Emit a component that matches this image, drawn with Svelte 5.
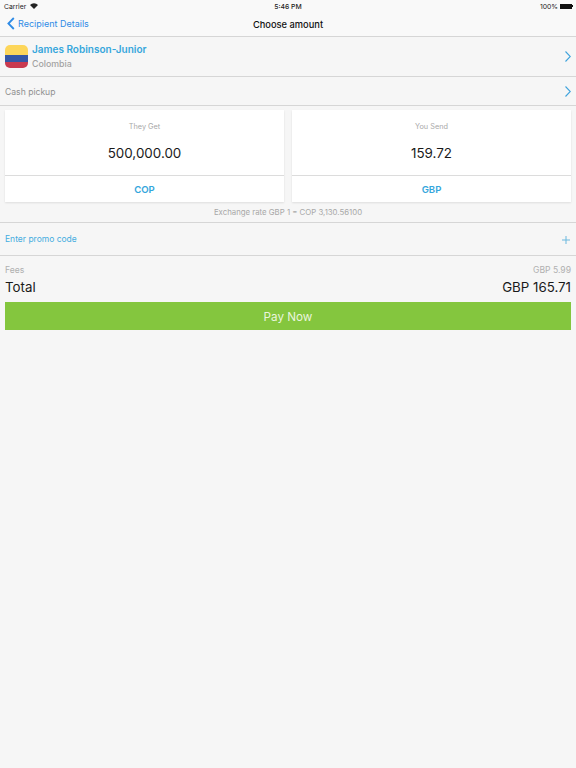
<script>
  const cards = [
    { label: 'They Get', value: '500,000.00', currency: 'COP' },
    { label: 'You Send', value: '159.72', currency: 'GBP' }
  ];
</script>

<div class="page">
  <header class="top">
    <div class="status">
      <div class="status-left">
        <span>Carrier</span>
        <svg width="8" height="6" viewBox="0 0 8 6"><path d="M0 2 A5.6 5.6 0 0 1 8 2 L4 6 Z" fill="#222"/></svg>
      </div>
      <span class="time">5:46 PM</span>
      <div class="status-right">
        <span>100%</span>
        <span class="battery"></span>
      </div>
    </div>
    <nav class="nav">
      <div class="back">
        <svg width="8" height="13" viewBox="0 0 8 13"><path d="M6.8 1 L1.4 6.5 L6.8 12" fill="none" stroke="#2f8be6" stroke-width="1.8"/></svg>
        <span>Recipient Details</span>
      </div>
      <div class="title">Choose amount</div>
    </nav>
  </header>

  <section class="row recipient">
    <div class="flag"><i class="y"></i><i class="b"></i><i class="r"></i></div>
    <div class="who">
      <div class="name">James Robinson-Junior</div>
      <div class="country">Colombia</div>
    </div>
    <svg class="chev" width="6" height="11" viewBox="0 0 6 11"><path d="M0.5 0.5 L5.3 5.5 L0.5 10.5" fill="none" stroke="#3fa3dc" stroke-width="1.1"/></svg>
  </section>

  <section class="row cash">
    <span>Cash pickup</span>
    <svg class="chev" width="6" height="11" viewBox="0 0 6 11"><path d="M0.5 0.5 L5.3 5.5 L0.5 10.5" fill="none" stroke="#3fa3dc" stroke-width="1.1"/></svg>
  </section>

  <section class="cards">
    {#each cards as c}
      <div class="card">
        <div class="card-label">{c.label}</div>
        <div class="card-value">{c.value}</div>
        <div class="card-cur">{c.currency}</div>
      </div>
    {/each}
  </section>

  <div class="rate">Exchange rate GBP 1 = COP 3,130.56100</div>

  <section class="row promo">
    <span>Enter promo code</span>
    <svg width="8" height="8" viewBox="0 0 8 8"><path d="M4 0V8M0 4H8" stroke="#6bb8de" stroke-width="1"/></svg>
  </section>

  <section class="totals">
    <div class="fees"><span>Fees</span><span>GBP 5.99</span></div>
    <div class="total"><span>Total</span><span>GBP 165.71</span></div>
    <button class="pay">Pay Now</button>
  </section>
</div>

<style>
  :global(body) {
    margin: 0;
    background: #f6f6f6;
  }
  .page {
    width: 576px;
    height: 768px;
    overflow: hidden;
    background: #f6f6f6;
    font-family: Inter, "Liberation Sans", sans-serif;
    color: #111;
  }
  .top {
    height: 36px;
    background: #f9f9f9;
    border-bottom: 1px solid #d6d6d6;
  }
  .status {
    height: 12px;
    display: grid;
    grid-template-columns: 1fr auto 1fr;
    align-items: center;
    padding: 0 4px;
    font-size: 6.8px;
    color: #222;
  }
  .status-left {
    display: flex;
    align-items: center;
    gap: 4px;
  }
  .status-right {
    display: flex;
    justify-content: flex-end;
    align-items: center;
    gap: 2px;
  }
  .time {
    font-weight: 500;
  }
  .battery {
    width: 12px;
    height: 5px;
    background: #111;
    position: relative;
  }
  .battery::after {
    content: "";
    position: absolute;
    right: -1px;
    top: 1.5px;
    width: 1px;
    height: 2px;
    background: #111;
  }
  .nav {
    position: relative;
    height: 24px;
    display: flex;
    align-items: center;
    justify-content: center;
  }
  .back {
    position: absolute;
    left: 7px;
    top: 5px;
    display: flex;
    align-items: center;
    gap: 3px;
    font-size: 9px;
    color: #2f8be6;
  }
  .title {
    font-size: 9.3px;
    font-weight: 500;
  }
  .row {
    display: flex;
    align-items: center;
    justify-content: space-between;
    padding: 0 5px;
    border-bottom: 1px solid #d6d6d6;
    box-sizing: border-box;
  }
  .recipient {
    height: 40px;
    justify-content: flex-start;
    gap: 4px;
  }
  .flag {
    width: 23px;
    height: 23px;
    border-radius: 5px;
    overflow: hidden;
    display: flex;
    flex-direction: column;
  }
  .flag i { display: block; }
  .flag .y { height: 10px; background: #fdd65a; }
  .flag .b { height: 7px; background: #3557a6; }
  .flag .r { height: 6px; background: #c93a50; }
  .who { flex: 1; }
  .name {
    font-size: 10px;
    font-weight: 600;
    color: #35a6dc;
    line-height: 13px;
  }
  .country {
    font-size: 8.8px;
    font-weight: 500;
    color: #a2a2a2;
    line-height: 13px;
    margin-top: 1px;
  }
  .cash {
    height: 29px;
    font-size: 8.6px;
    color: #909090;
  }
  .cash span { padding-top: 1px; }
  .cards {
    display: grid;
    grid-template-columns: 279px 279px;
    gap: 8px;
    padding: 4px 5px 0;
  }
  .card {
    height: 92px;
    background: #fff;
    box-shadow: 0 1px 2px rgba(0, 0, 0, 0.1);
    display: flex;
    flex-direction: column;
    align-items: center;
  }
  .card-label {
    font-size: 7.3px;
    color: #a8a8a8;
    line-height: 10px;
    margin-top: 12px;
  }
  .card-value {
    font-size: 13.4px;
    line-height: 18px;
    margin-top: 12px;
    color: #1a1a1a;
    height: 31px;
  }
  .card-cur {
    align-self: stretch;
    flex: 1;
    border-top: 1px solid #dcdcdc;
    display: flex;
    align-items: center;
    justify-content: center;
    font-size: 9.6px;
    font-weight: 600;
    color: #35a6dc;
  }
  .rate {
    height: 20px;
    line-height: 20px;
    text-align: center;
    font-size: 7.8px;
    color: #a8a8a8;
    border-bottom: 1px solid #d6d6d6;
  }
  .promo {
    height: 33px;
    font-size: 8.5px;
    color: #45ade0;
  }
  .promo svg { margin-right: 1px; margin-top: 1px; }
  .totals {
    padding: 8px 5px 0;
  }
  .fees, .total {
    display: flex;
    justify-content: space-between;
  }
  .fees {
    font-size: 8.6px;
    line-height: 12px;
    color: #b0b0b0;
  }
  .total {
    font-size: 13.3px;
    line-height: 19px;
    margin-top: 2px;
    color: #1a1a1a;
  }
  .pay {
    display: block;
    width: 100%;
    height: 28px;
    margin-top: 5px;
    border: 0;
    padding: 2px 0 0;
    background: #84c63e;
    color: #eaf5dd;
    font: inherit;
    font-size: 11.7px;
  }
</style>
